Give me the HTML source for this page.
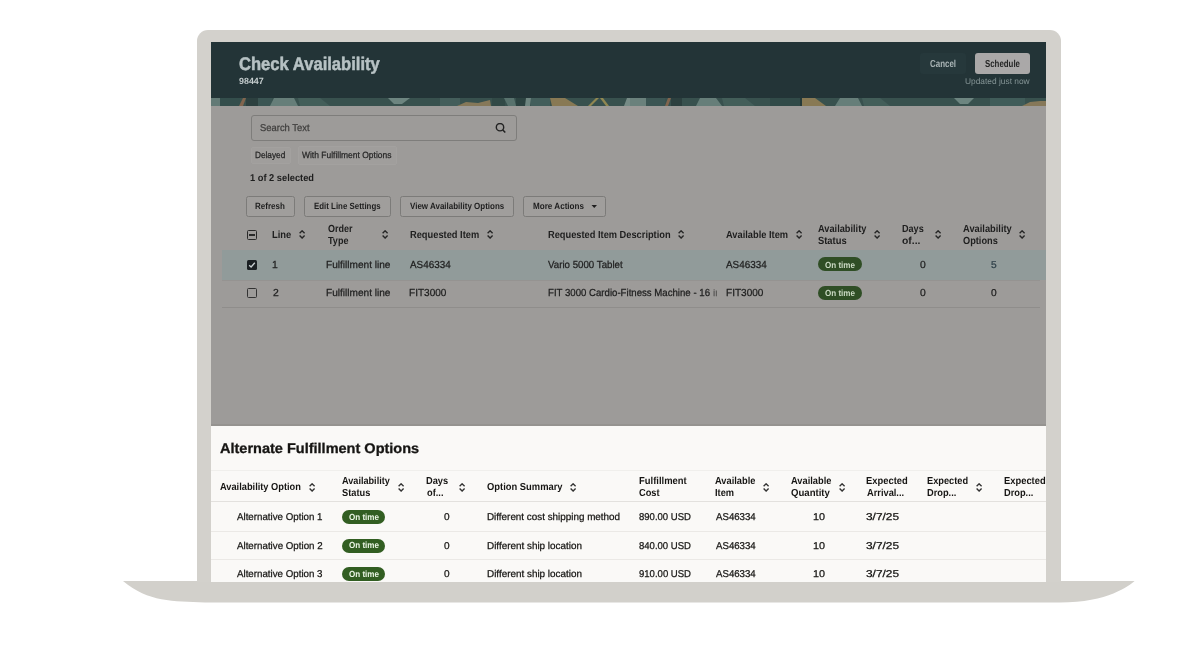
<!DOCTYPE html>
<html><head><meta charset="utf-8">
<style>
html,body{margin:0;padding:0;background:#ffffff;width:1187px;height:670px;overflow:hidden;position:relative;font-family:"Liberation Sans",sans-serif}
.a{position:absolute;box-sizing:border-box}
.t{position:absolute;white-space:pre;text-rendering:geometricPrecision;transform-origin:0 0;font-family:"Liberation Sans",sans-serif}
</style></head><body>
<!-- laptop base -->
<svg class="a" style="left:0;top:0" width="1187" height="670" viewBox="0 0 1187 670"><path d="M123,581 C148.6,602.3 172.8,601.1 205,602.5 L1055,602.5 C1107,603.7 1129.1,585.6 1134.6,581 Z" fill="#d2d0cb"/></svg>
<!-- bezel -->
<div class="a" style="left:197px;top:30px;width:864px;height:552px;background:#d3d1cc;border-radius:11px 11px 0 0"></div>
<!-- screen -->
<div class="a" style="left:211px;top:42px;width:835px;height:540px;background:#9d9b99;overflow:hidden">
  <!-- header -->
  <div class="a" style="left:0;top:0;width:835px;height:64px;background:#233437"></div>
  <!-- band -->
  <svg class="a" style="left:0;top:56px" width="835" height="8" viewBox="0 0 835 8"><defs><filter id="bl" x="-1%" y="-50%" width="102%" height="200%"><feGaussianBlur stdDeviation="0.7"/></filter></defs><rect x="0" y="0" width="835" height="8" fill="#38514e"/><g filter="url(#bl)" opacity="0.65"><rect x="0" y="0" width="9" height="8" fill="#7a918c"/><rect x="9" y="0" width="20" height="8" fill="#334d4c"/><polygon points="28,8 32,0 35,0 32,8" fill="#a8704f"/><rect x="35" y="0" width="12" height="8" fill="#263938"/><rect x="47" y="0" width="14" height="8" fill="#3e5956"/><polygon points="59,8 63,0 83,0 87,8" fill="#7f9691"/><polygon points="87,0 109,0 119,8 89,8" fill="#4a6561"/><polygon points="177,0 199,0 191,6 183,6" fill="#8aa29b"/><rect x="229" y="0" width="20" height="8" fill="#4b6662"/><polygon points="246,8 255,4 267,5 279,2 280,8" fill="#b08d5e"/><rect x="281" y="0" width="13" height="8" fill="#2d4543"/><polygon points="293,0 303,0 305,8 297,8" fill="#6a847f"/><rect x="305" y="0" width="10" height="8" fill="#283c3b"/><polygon points="315,0 320,0 319,8 314,8" fill="#8ba19c"/><rect x="320" y="0" width="19" height="8" fill="#4a6662"/><polygon points="339,0 354,0 367,8 341,8" fill="#b38f58"/><polygon points="377,8 385,0 388,0 380,8" fill="#c0a452"/><polygon points="389,0 392,0 398,8 395,8" fill="#c0a452"/><polygon points="413,8 416,0 424,0 424,8" fill="#98aba5"/><rect x="419" y="0" width="16" height="8" fill="#869b96"/><rect x="435" y="0" width="19" height="8" fill="#3e5956"/><polygon points="454,8 457,0 460,0 457,8" fill="#a8704f"/><rect x="460" y="0" width="11" height="8" fill="#263938"/><polygon points="485,8 489,0 505,0 511,8" fill="#7f9691"/><polygon points="511,0 534,0 544,8 513,8" fill="#4a6561"/><rect x="559" y="0" width="30" height="8" fill="#2e4644"/><polygon points="591,0 604,0 615,8 591,8" fill="#b38f58"/><rect x="589" y="0" width="2" height="8" fill="#1f2e2d"/><polygon points="624,8 629,0 647,0 651,8" fill="#7f9691"/><polygon points="651,0 669,0 679,8 653,8" fill="#4a6561"/><polygon points="743,0 763,0 757,6 749,6" fill="#8aa29b"/><rect x="779" y="0" width="35" height="8" fill="#456360"/><polygon points="811,8 819,4 829,3 835,3 835,8" fill="#b08d5e"/></g></svg>
</div>
<!-- overlays drawn in page coordinates -->
<!-- cancel btn bg -->
<div class="a" style="left:920px;top:53px;width:46px;height:21px;border-radius:3px;background:#26383b"></div>
<!-- schedule btn -->
<div class="a" style="left:975px;top:53px;width:55px;height:21px;border-radius:3px;background:#aaa8a8"></div>
<!-- search box -->
<div class="a" style="left:251px;top:115px;width:266px;height:26px;border:1px solid #7e7d7b;border-radius:3px"></div>
<svg class="a" style="left:495px;top:123px" width="12" height="11" viewBox="0 0 12 11"><circle cx="5" cy="4.2" r="3.7" fill="none" stroke="#222" stroke-width="1.4"/><line x1="7.7" y1="6.9" x2="10.3" y2="9.5" stroke="#222" stroke-width="1.5"/></svg>
<!-- chips -->
<div class="a" style="left:251px;top:147px;width:40px;height:17px;border:1px solid #a3a19f;border-radius:2px;background:#a09e9c"></div>
<div class="a" style="left:298px;top:146px;width:99px;height:19px;border:1px solid #a3a19f;border-radius:2px;background:#a09e9c"></div>
<!-- toolbar buttons -->
<div class="a" style="left:246px;top:196px;width:49px;height:21px;border:1px solid #7c7b79;border-radius:2.5px;background:#a09e9c"></div>
<div class="a" style="left:304px;top:196px;width:87px;height:21px;border:1px solid #7c7b79;border-radius:2.5px;background:#a09e9c"></div>
<div class="a" style="left:400px;top:196px;width:114px;height:21px;border:1px solid #7c7b79;border-radius:2.5px;background:#a09e9c"></div>
<div class="a" style="left:523px;top:196px;width:83px;height:21px;border:1px solid #7c7b79;border-radius:2.5px;background:#a09e9c"></div>
<svg class="a" style="left:591px;top:204px" width="7" height="5" viewBox="0 0 7 5"><polygon points="0.5,1 6,1 3.25,4" fill="#1e1e1e"/></svg>
<!-- header checkbox -->
<div class="a" style="left:247px;top:230px;width:10px;height:10px;border:1.2px solid #2a2a2a;border-radius:1.5px"></div>
<div class="a" style="left:249.3px;top:234.2px;width:5.4px;height:1.6px;background:#2a2a2a"></div>
<!-- row1 selected -->
<div class="a" style="left:222px;top:250px;width:824px;height:29.5px;background:#919b9a"></div>
<div class="a" style="left:222px;top:306.8px;width:818px;height:1px;background:#8f8d8b"></div>
<div class="a" style="left:222px;top:279.5px;width:818px;height:1px;background:#959391"></div>
<!-- checkbox checked -->
<div class="a" style="left:247px;top:260px;width:9.5px;height:9.5px;background:#1a1f22;border-radius:1.5px"></div>
<svg class="a" style="left:247px;top:260px" width="10" height="10" viewBox="0 0 10 10"><polyline points="2.2,5.2 4.1,7 7.8,2.8" fill="none" stroke="#c9d0d2" stroke-width="1.3"/></svg>
<div class="a" style="left:247px;top:288px;width:10px;height:10px;border:1.2px solid #333;border-radius:1.5px"></div>
<!-- badges table1 -->
<div class="a" style="left:818px;top:257px;width:44px;height:14px;border-radius:7px;background:#2f4e25"></div>
<div class="a" style="left:818px;top:285.5px;width:44px;height:14px;border-radius:7px;background:#2f4e25"></div>
<!-- panel -->
<div class="a" style="left:211px;top:426px;width:835px;height:156px;background:#faf9f7"></div>
<div class="a" style="left:211px;top:424px;width:835px;height:2px;background:#8f8d8b;opacity:.6"></div>
<div class="a" style="left:211px;top:470px;width:835px;height:1px;background:#f0efec"></div>
<div class="a" style="left:211px;top:501px;width:835px;height:1px;background:#e3e1de"></div>
<div class="a" style="left:211px;top:530.5px;width:835px;height:1px;background:#ebe9e6"></div>
<div class="a" style="left:211px;top:559px;width:835px;height:1px;background:#ebe9e6"></div>
<!-- panel badges -->
<div class="a" style="left:342.3px;top:510px;width:43px;height:14px;border-radius:7px;background:#325e22"></div>
<div class="a" style="left:342.3px;top:538.5px;width:43px;height:14px;border-radius:7px;background:#325e22"></div>
<div class="a" style="left:342.3px;top:566.8px;width:43px;height:14px;border-radius:7px;background:#325e22"></div>
<svg class="a" style="left:298.8px;top:230.2px" width="7" height="9" viewBox="0 0 7 9"><polyline points="0.6,3.3 3.1,0.8 5.6,3.3" fill="none" stroke="#262626" stroke-width="1.35"/><polyline points="0.6,5.6 3.1,8.1 5.6,5.6" fill="none" stroke="#262626" stroke-width="1.35"/></svg>
<svg class="a" style="left:381.8px;top:230.2px" width="7" height="9" viewBox="0 0 7 9"><polyline points="0.6,3.3 3.1,0.8 5.6,3.3" fill="none" stroke="#262626" stroke-width="1.35"/><polyline points="0.6,5.6 3.1,8.1 5.6,5.6" fill="none" stroke="#262626" stroke-width="1.35"/></svg>
<svg class="a" style="left:487.3px;top:230.2px" width="7" height="9" viewBox="0 0 7 9"><polyline points="0.6,3.3 3.1,0.8 5.6,3.3" fill="none" stroke="#262626" stroke-width="1.35"/><polyline points="0.6,5.6 3.1,8.1 5.6,5.6" fill="none" stroke="#262626" stroke-width="1.35"/></svg>
<svg class="a" style="left:678.0px;top:230.2px" width="7" height="9" viewBox="0 0 7 9"><polyline points="0.6,3.3 3.1,0.8 5.6,3.3" fill="none" stroke="#262626" stroke-width="1.35"/><polyline points="0.6,5.6 3.1,8.1 5.6,5.6" fill="none" stroke="#262626" stroke-width="1.35"/></svg>
<svg class="a" style="left:796.0px;top:230.2px" width="7" height="9" viewBox="0 0 7 9"><polyline points="0.6,3.3 3.1,0.8 5.6,3.3" fill="none" stroke="#262626" stroke-width="1.35"/><polyline points="0.6,5.6 3.1,8.1 5.6,5.6" fill="none" stroke="#262626" stroke-width="1.35"/></svg>
<svg class="a" style="left:873.7px;top:230.2px" width="7" height="9" viewBox="0 0 7 9"><polyline points="0.6,3.3 3.1,0.8 5.6,3.3" fill="none" stroke="#262626" stroke-width="1.35"/><polyline points="0.6,5.6 3.1,8.1 5.6,5.6" fill="none" stroke="#262626" stroke-width="1.35"/></svg>
<svg class="a" style="left:934.6px;top:230.2px" width="7" height="9" viewBox="0 0 7 9"><polyline points="0.6,3.3 3.1,0.8 5.6,3.3" fill="none" stroke="#262626" stroke-width="1.35"/><polyline points="0.6,5.6 3.1,8.1 5.6,5.6" fill="none" stroke="#262626" stroke-width="1.35"/></svg>
<svg class="a" style="left:1018.6px;top:230.2px" width="7" height="9" viewBox="0 0 7 9"><polyline points="0.6,3.3 3.1,0.8 5.6,3.3" fill="none" stroke="#262626" stroke-width="1.35"/><polyline points="0.6,5.6 3.1,8.1 5.6,5.6" fill="none" stroke="#262626" stroke-width="1.35"/></svg>
<svg class="a" style="left:308.8px;top:482.5px" width="7" height="9" viewBox="0 0 7 9"><polyline points="0.6,3.3 3.1,0.8 5.6,3.3" fill="none" stroke="#333333" stroke-width="1.35"/><polyline points="0.6,5.6 3.1,8.1 5.6,5.6" fill="none" stroke="#333333" stroke-width="1.35"/></svg>
<svg class="a" style="left:398.0px;top:482.5px" width="7" height="9" viewBox="0 0 7 9"><polyline points="0.6,3.3 3.1,0.8 5.6,3.3" fill="none" stroke="#333333" stroke-width="1.35"/><polyline points="0.6,5.6 3.1,8.1 5.6,5.6" fill="none" stroke="#333333" stroke-width="1.35"/></svg>
<svg class="a" style="left:458.8px;top:482.5px" width="7" height="9" viewBox="0 0 7 9"><polyline points="0.6,3.3 3.1,0.8 5.6,3.3" fill="none" stroke="#333333" stroke-width="1.35"/><polyline points="0.6,5.6 3.1,8.1 5.6,5.6" fill="none" stroke="#333333" stroke-width="1.35"/></svg>
<svg class="a" style="left:570.0px;top:482.5px" width="7" height="9" viewBox="0 0 7 9"><polyline points="0.6,3.3 3.1,0.8 5.6,3.3" fill="none" stroke="#333333" stroke-width="1.35"/><polyline points="0.6,5.6 3.1,8.1 5.6,5.6" fill="none" stroke="#333333" stroke-width="1.35"/></svg>
<svg class="a" style="left:762.5px;top:482.5px" width="7" height="9" viewBox="0 0 7 9"><polyline points="0.6,3.3 3.1,0.8 5.6,3.3" fill="none" stroke="#333333" stroke-width="1.35"/><polyline points="0.6,5.6 3.1,8.1 5.6,5.6" fill="none" stroke="#333333" stroke-width="1.35"/></svg>
<svg class="a" style="left:838.5px;top:482.5px" width="7" height="9" viewBox="0 0 7 9"><polyline points="0.6,3.3 3.1,0.8 5.6,3.3" fill="none" stroke="#333333" stroke-width="1.35"/><polyline points="0.6,5.6 3.1,8.1 5.6,5.6" fill="none" stroke="#333333" stroke-width="1.35"/></svg>
<svg class="a" style="left:976.0px;top:482.5px" width="7" height="9" viewBox="0 0 7 9"><polyline points="0.6,3.3 3.1,0.8 5.6,3.3" fill="none" stroke="#333333" stroke-width="1.35"/><polyline points="0.6,5.6 3.1,8.1 5.6,5.6" fill="none" stroke="#333333" stroke-width="1.35"/></svg>
<div class="t" style="left:238.74px;top:54.80px;font-size:18.3px;line-height:18.3px;color:#b7c2c4;font-weight:700;transform:scaleX(0.9077);-webkit-text-stroke:0.5px #b7c2c4">Check Availability</div>
<div class="t" style="left:238.93px;top:77.40px;font-size:9.0px;line-height:9.0px;color:#c5cdce;font-weight:700;transform:scaleX(0.9881)">98447</div>
<div class="t" style="left:930.48px;top:60.00px;font-size:10.2px;line-height:10.2px;color:#a9b4b5;font-weight:700;transform:scaleX(0.7794)">Cancel</div>
<div class="t" style="left:985.26px;top:60.20px;font-size:10.2px;line-height:10.2px;color:#262626;font-weight:700;transform:scaleX(0.7722)">Schedule</div>
<div class="t" style="left:965.33px;top:77.30px;font-size:8.5px;line-height:8.5px;color:#849495;font-weight:400;transform:scaleX(0.9842)">Updated just now</div>
<div class="t" style="left:260.33px;top:124.30px;font-size:9.9px;line-height:9.9px;color:#3f3e3d;font-weight:400;transform:scaleX(0.9539);-webkit-text-stroke:0.25px #3f3e3d">Search Text</div>
<div class="t" style="left:255.34px;top:151.00px;font-size:9.0px;line-height:9.0px;color:#262626;font-weight:400;transform:scaleX(0.9154);-webkit-text-stroke:0.25px #262626">Delayed</div>
<div class="t" style="left:301.92px;top:151.00px;font-size:9.0px;line-height:9.0px;color:#262626;font-weight:400;transform:scaleX(0.9409);-webkit-text-stroke:0.25px #262626">With Fulfillment Options</div>
<div class="t" style="left:250.44px;top:173.80px;font-size:9.9px;line-height:9.9px;color:#1e1e1e;font-weight:700;transform:scaleX(0.9400)">1 of 2 selected</div>
<div class="t" style="left:255.44px;top:202.40px;font-size:9.0px;line-height:9.0px;color:#1e1e1e;font-weight:700;transform:scaleX(0.8883)">Refresh</div>
<div class="t" style="left:314.05px;top:202.40px;font-size:9.0px;line-height:9.0px;color:#1e1e1e;font-weight:700;transform:scaleX(0.8764)">Edit Line Settings</div>
<div class="t" style="left:410.12px;top:202.40px;font-size:9.0px;line-height:9.0px;color:#1e1e1e;font-weight:700;transform:scaleX(0.8870)">View Availability Options</div>
<div class="t" style="left:533.03px;top:202.40px;font-size:9.0px;line-height:9.0px;color:#1e1e1e;font-weight:700;transform:scaleX(0.8993)">More Actions</div>
<div class="t" style="left:272.14px;top:231.20px;font-size:10.3px;line-height:10.3px;color:#1e1e1e;font-weight:700;transform:scaleX(0.9111)">Line</div>
<div class="t" style="left:327.64px;top:224.80px;font-size:10.3px;line-height:10.3px;color:#1e1e1e;font-weight:700;transform:scaleX(0.8727)">Order</div>
<div class="t" style="left:327.91px;top:236.60px;font-size:10.3px;line-height:10.3px;color:#1e1e1e;font-weight:700;transform:scaleX(0.8786)">Type</div>
<div class="t" style="left:410.15px;top:231.20px;font-size:10.3px;line-height:10.3px;color:#1e1e1e;font-weight:700;transform:scaleX(0.9019)">Requested Item</div>
<div class="t" style="left:547.65px;top:231.20px;font-size:10.3px;line-height:10.3px;color:#1e1e1e;font-weight:700;transform:scaleX(0.9004)">Requested Item Description</div>
<div class="t" style="left:726.12px;top:231.20px;font-size:10.3px;line-height:10.3px;color:#1e1e1e;font-weight:700;transform:scaleX(0.9017)">Available Item</div>
<div class="t" style="left:817.52px;top:224.80px;font-size:10.3px;line-height:10.3px;color:#1e1e1e;font-weight:700;transform:scaleX(0.8963)">Availability</div>
<div class="t" style="left:817.52px;top:236.60px;font-size:10.3px;line-height:10.3px;color:#1e1e1e;font-weight:700;transform:scaleX(0.9098)">Status</div>
<div class="t" style="left:902.06px;top:224.80px;font-size:10.3px;line-height:10.3px;color:#1e1e1e;font-weight:700;transform:scaleX(0.8815)">Days</div>
<div class="t" style="left:902.29px;top:236.60px;font-size:10.3px;line-height:10.3px;color:#1e1e1e;font-weight:700;transform:scaleX(1.0058)">of...</div>
<div class="t" style="left:962.62px;top:224.80px;font-size:10.3px;line-height:10.3px;color:#1e1e1e;font-weight:700;transform:scaleX(0.9038)">Availability</div>
<div class="t" style="left:962.93px;top:236.60px;font-size:10.3px;line-height:10.3px;color:#1e1e1e;font-weight:700;transform:scaleX(0.8948)">Options</div>
<div class="t" style="left:272.37px;top:260.80px;font-size:10.2px;line-height:10.2px;color:#1e1e1e;font-weight:400;transform:scaleX(1.0177);-webkit-text-stroke:0.25px #1e1e1e">1</div>
<div class="t" style="left:326.39px;top:260.80px;font-size:10.2px;line-height:10.2px;color:#1e1e1e;font-weight:400;transform:scaleX(0.9898);-webkit-text-stroke:0.25px #1e1e1e">Fulfillment line</div>
<div class="t" style="left:410.10px;top:260.80px;font-size:10.2px;line-height:10.2px;color:#1e1e1e;font-weight:400;transform:scaleX(0.9708);-webkit-text-stroke:0.25px #1e1e1e">AS46334</div>
<div class="t" style="left:548.20px;top:260.80px;font-size:10.2px;line-height:10.2px;color:#1e1e1e;font-weight:400;transform:scaleX(0.9535);-webkit-text-stroke:0.25px #1e1e1e">Vario 5000 Tablet</div>
<div class="t" style="left:726.40px;top:260.80px;font-size:10.2px;line-height:10.2px;color:#1e1e1e;font-weight:400;transform:scaleX(0.9708);-webkit-text-stroke:0.25px #1e1e1e">AS46334</div>
<div class="t" style="left:919.58px;top:260.80px;font-size:10.2px;line-height:10.2px;color:#1e1e1e;font-weight:400;transform:scaleX(1.0177);-webkit-text-stroke:0.25px #1e1e1e">0</div>
<div class="t" style="left:991.39px;top:260.80px;font-size:10.0px;line-height:10.0px;color:#2d3f48;font-weight:400;transform:scaleX(1.0177);-webkit-text-stroke:0.25px #2d3f48">5</div>
<div class="t" style="left:272.68px;top:288.90px;font-size:10.2px;line-height:10.2px;color:#1e1e1e;font-weight:400;transform:scaleX(1.0177);-webkit-text-stroke:0.25px #1e1e1e">2</div>
<div class="t" style="left:326.39px;top:288.90px;font-size:10.2px;line-height:10.2px;color:#1e1e1e;font-weight:400;transform:scaleX(0.9898);-webkit-text-stroke:0.25px #1e1e1e">Fulfillment line</div>
<div class="t" style="left:409.30px;top:288.90px;font-size:10.2px;line-height:10.2px;color:#1e1e1e;font-weight:400;transform:scaleX(0.9858);-webkit-text-stroke:0.25px #1e1e1e">FIT3000</div>
<div class="t" style="left:547.53px;top:288.90px;font-size:10.2px;line-height:10.2px;color:#1e1e1e;font-weight:400;transform:scaleX(0.9452);-webkit-text-stroke:0.25px #1e1e1e">FIT 3000 Cardio-Fitness Machine - 16</div>
<div class="t" style="left:712.67px;top:288.90px;font-size:10.2px;line-height:10.2px;color:#5a5958;font-weight:400;transform:scaleX(1.0177);-webkit-text-stroke:0.25px #5a5958;width:4.3px;overflow:hidden">in</div>
<div class="t" style="left:725.60px;top:288.90px;font-size:10.2px;line-height:10.2px;color:#1e1e1e;font-weight:400;transform:scaleX(0.9858);-webkit-text-stroke:0.25px #1e1e1e">FIT3000</div>
<div class="t" style="left:919.58px;top:288.90px;font-size:10.2px;line-height:10.2px;color:#1e1e1e;font-weight:400;transform:scaleX(1.0177);-webkit-text-stroke:0.25px #1e1e1e">0</div>
<div class="t" style="left:991.39px;top:288.90px;font-size:10.0px;line-height:10.0px;color:#1e1e1e;font-weight:400;transform:scaleX(1.0177);-webkit-text-stroke:0.25px #1e1e1e">0</div>
<div class="t" style="left:219.66px;top:441.10px;font-size:14.1px;line-height:14.1px;color:#161513;font-weight:700;transform:scaleX(1.0298);-webkit-text-stroke:0.3px #161513">Alternate Fulfillment Options</div>
<div class="t" style="left:219.72px;top:483.30px;font-size:10.2px;line-height:10.2px;color:#161513;font-weight:700;transform:scaleX(0.9079)">Availability Option</div>
<div class="t" style="left:342.03px;top:476.80px;font-size:10.2px;line-height:10.2px;color:#161513;font-weight:700;transform:scaleX(0.8957)">Availability</div>
<div class="t" style="left:342.02px;top:488.60px;font-size:10.2px;line-height:10.2px;color:#161513;font-weight:700;transform:scaleX(0.9083)">Status</div>
<div class="t" style="left:426.35px;top:476.80px;font-size:10.2px;line-height:10.2px;color:#161513;font-weight:700;transform:scaleX(0.9098)">Days</div>
<div class="t" style="left:426.63px;top:488.60px;font-size:10.2px;line-height:10.2px;color:#161513;font-weight:700;transform:scaleX(0.9098)">of...</div>
<div class="t" style="left:486.92px;top:483.30px;font-size:10.2px;line-height:10.2px;color:#161513;font-weight:700;transform:scaleX(0.9204)">Option Summary</div>
<div class="t" style="left:638.94px;top:476.80px;font-size:10.2px;line-height:10.2px;color:#161513;font-weight:700;transform:scaleX(0.9252)">Fulfillment</div>
<div class="t" style="left:639.23px;top:488.60px;font-size:10.2px;line-height:10.2px;color:#161513;font-weight:700;transform:scaleX(0.9098)">Cost</div>
<div class="t" style="left:715.32px;top:476.80px;font-size:10.2px;line-height:10.2px;color:#161513;font-weight:700;transform:scaleX(0.9098)">Available</div>
<div class="t" style="left:714.95px;top:488.60px;font-size:10.2px;line-height:10.2px;color:#161513;font-weight:700;transform:scaleX(0.9098)">Item</div>
<div class="t" style="left:791.02px;top:476.80px;font-size:10.2px;line-height:10.2px;color:#161513;font-weight:700;transform:scaleX(0.9098)">Available</div>
<div class="t" style="left:790.92px;top:488.60px;font-size:10.2px;line-height:10.2px;color:#161513;font-weight:700;transform:scaleX(0.9413)">Quantity</div>
<div class="t" style="left:866.14px;top:476.80px;font-size:10.2px;line-height:10.2px;color:#161513;font-weight:700;transform:scaleX(0.9213)">Expected</div>
<div class="t" style="left:866.52px;top:488.60px;font-size:10.2px;line-height:10.2px;color:#161513;font-weight:700;transform:scaleX(0.9098)">Arrival...</div>
<div class="t" style="left:926.85px;top:476.80px;font-size:10.2px;line-height:10.2px;color:#161513;font-weight:700;transform:scaleX(0.9076)">Expected</div>
<div class="t" style="left:926.85px;top:488.60px;font-size:10.2px;line-height:10.2px;color:#161513;font-weight:700;transform:scaleX(0.9098)">Drop...</div>
<div class="t" style="left:1003.54px;top:476.80px;font-size:10.2px;line-height:10.2px;color:#161513;font-weight:700;transform:scaleX(0.9190)">Expected</div>
<div class="t" style="left:1003.55px;top:488.60px;font-size:10.2px;line-height:10.2px;color:#161513;font-weight:700;transform:scaleX(0.9098)">Drop...</div>
<div class="t" style="left:236.70px;top:513.20px;font-size:9.9px;line-height:9.9px;color:#161513;font-weight:400;transform:scaleX(0.9858);-webkit-text-stroke:0.25px #161513">Alternative Option 1</div>
<div class="t" style="left:444.30px;top:513.20px;font-size:9.9px;line-height:9.9px;color:#161513;font-weight:400;transform:scaleX(1.0177);-webkit-text-stroke:0.25px #161513">0</div>
<div class="t" style="left:486.51px;top:513.20px;font-size:9.9px;line-height:9.9px;color:#161513;font-weight:400;transform:scaleX(0.9987);-webkit-text-stroke:0.25px #161513">Different cost shipping method</div>
<div class="t" style="left:639.22px;top:513.20px;font-size:9.9px;line-height:9.9px;color:#161513;font-weight:400;transform:scaleX(0.9649);-webkit-text-stroke:0.25px #161513">890.00 USD</div>
<div class="t" style="left:715.60px;top:513.20px;font-size:9.9px;line-height:9.9px;color:#161513;font-weight:400;transform:scaleX(0.9779);-webkit-text-stroke:0.25px #161513">AS46334</div>
<div class="t" style="left:813.04px;top:513.20px;font-size:9.9px;line-height:9.9px;color:#161513;font-weight:400;transform:scaleX(1.0917);-webkit-text-stroke:0.25px #161513">10</div>
<div class="t" style="left:866.32px;top:513.20px;font-size:9.9px;line-height:9.9px;color:#161513;font-weight:400;transform:scaleX(1.2009);-webkit-text-stroke:0.25px #161513">3/7/25</div>
<div class="t" style="left:236.70px;top:541.60px;font-size:9.9px;line-height:9.9px;color:#161513;font-weight:400;transform:scaleX(0.9870);-webkit-text-stroke:0.25px #161513">Alternative Option 2</div>
<div class="t" style="left:444.30px;top:541.60px;font-size:9.9px;line-height:9.9px;color:#161513;font-weight:400;transform:scaleX(1.0177);-webkit-text-stroke:0.25px #161513">0</div>
<div class="t" style="left:486.51px;top:541.60px;font-size:9.9px;line-height:9.9px;color:#161513;font-weight:400;transform:scaleX(1.0015);-webkit-text-stroke:0.25px #161513">Different ship location</div>
<div class="t" style="left:639.22px;top:541.60px;font-size:9.9px;line-height:9.9px;color:#161513;font-weight:400;transform:scaleX(0.9649);-webkit-text-stroke:0.25px #161513">840.00 USD</div>
<div class="t" style="left:715.60px;top:541.60px;font-size:9.9px;line-height:9.9px;color:#161513;font-weight:400;transform:scaleX(0.9779);-webkit-text-stroke:0.25px #161513">AS46334</div>
<div class="t" style="left:813.04px;top:541.60px;font-size:9.9px;line-height:9.9px;color:#161513;font-weight:400;transform:scaleX(1.0917);-webkit-text-stroke:0.25px #161513">10</div>
<div class="t" style="left:866.32px;top:541.60px;font-size:9.9px;line-height:9.9px;color:#161513;font-weight:400;transform:scaleX(1.2009);-webkit-text-stroke:0.25px #161513">3/7/25</div>
<div class="t" style="left:236.70px;top:569.90px;font-size:9.9px;line-height:9.9px;color:#161513;font-weight:400;transform:scaleX(0.9858);-webkit-text-stroke:0.25px #161513">Alternative Option 3</div>
<div class="t" style="left:444.30px;top:569.90px;font-size:9.9px;line-height:9.9px;color:#161513;font-weight:400;transform:scaleX(1.0177);-webkit-text-stroke:0.25px #161513">0</div>
<div class="t" style="left:486.51px;top:569.90px;font-size:9.9px;line-height:9.9px;color:#161513;font-weight:400;transform:scaleX(1.0015);-webkit-text-stroke:0.25px #161513">Different ship location</div>
<div class="t" style="left:639.12px;top:569.90px;font-size:9.9px;line-height:9.9px;color:#161513;font-weight:400;transform:scaleX(0.9667);-webkit-text-stroke:0.25px #161513">910.00 USD</div>
<div class="t" style="left:715.60px;top:569.90px;font-size:9.9px;line-height:9.9px;color:#161513;font-weight:400;transform:scaleX(0.9779);-webkit-text-stroke:0.25px #161513">AS46334</div>
<div class="t" style="left:813.04px;top:569.90px;font-size:9.9px;line-height:9.9px;color:#161513;font-weight:400;transform:scaleX(1.0917);-webkit-text-stroke:0.25px #161513">10</div>
<div class="t" style="left:866.32px;top:569.90px;font-size:9.9px;line-height:9.9px;color:#161513;font-weight:400;transform:scaleX(1.2009);-webkit-text-stroke:0.25px #161513">3/7/25</div>
<div class="t" style="left:824.58px;top:260.70px;font-size:8.9px;line-height:8.9px;color:#c9d8c2;font-weight:700;transform:scaleX(0.9081)">On time</div>
<div class="t" style="left:824.58px;top:288.80px;font-size:8.9px;line-height:8.9px;color:#c9d8c2;font-weight:700;transform:scaleX(0.9081)">On time</div>
<div class="t" style="left:348.78px;top:513.00px;font-size:8.9px;line-height:8.9px;color:#eaf5e4;font-weight:700;transform:scaleX(0.9081)">On time</div>
<div class="t" style="left:348.78px;top:541.40px;font-size:8.9px;line-height:8.9px;color:#eaf5e4;font-weight:700;transform:scaleX(0.9081)">On time</div>
<div class="t" style="left:348.78px;top:569.70px;font-size:8.9px;line-height:8.9px;color:#eaf5e4;font-weight:700;transform:scaleX(0.9081)">On time</div>
</body></html>
